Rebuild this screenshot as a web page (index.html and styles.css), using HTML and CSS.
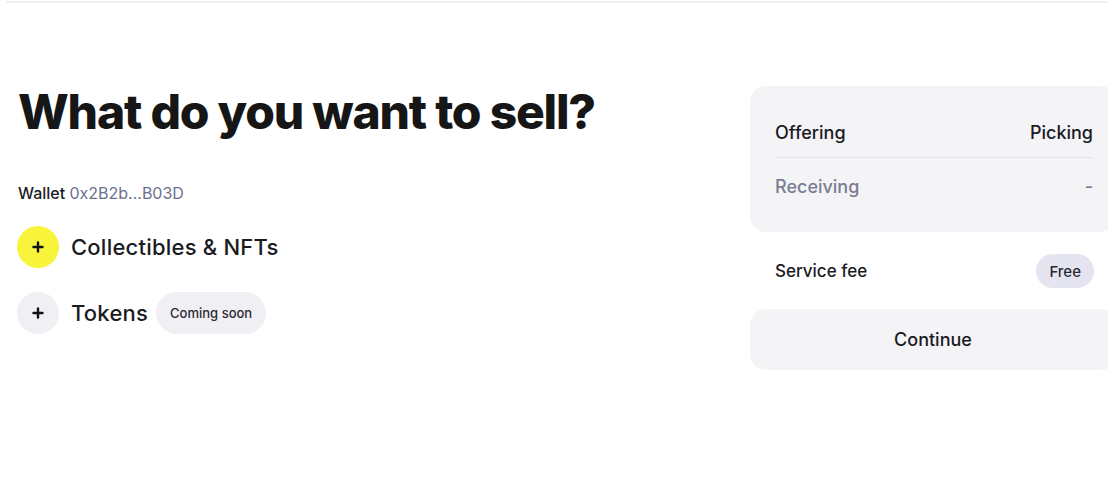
FILE: index.html
```html
<!DOCTYPE html>
<html>
<head>
<meta charset="utf-8">
<link rel="stylesheet" href="styles.css">
</head>
<body>
<div class="topline"></div>
<div class="page">
  <section class="left">
    <h1 class="title">What do you want to sell?</h1>
    <div class="wallet">Wallet <span class="addr">0x2B2b...B03D</span></div>
    <div class="options">
      <div class="option">
        <span class="plus plus-yellow"><svg width="12" height="12" viewBox="0 0 12 12"><path d="M6 1.5v9M1.5 6h9" stroke="#111" stroke-width="2.4" stroke-linecap="round"/></svg></span>
        <span class="opt-label">Collectibles &amp; NFTs</span>
      </div>
      <div class="option">
        <span class="plus plus-gray"><svg width="12" height="12" viewBox="0 0 12 12"><path d="M6 1.5v9M1.5 6h9" stroke="#111" stroke-width="2.4" stroke-linecap="round"/></svg></span>
        <span class="opt-label">Tokens</span>
        <span class="soon">Coming soon</span>
      </div>
    </div>
  </section>
  <aside class="right">
    <div class="card">
      <div class="row row-top"><span>Offering</span><span>Picking</span></div>
      <div class="row row-muted"><span>Receiving</span><span>-</span></div>
    </div>
    <div class="fee"><span>Service fee</span><span class="free">Free</span></div>
    <button class="continue">Continue</button>
  </aside>
</div>
</body>
</html>
```
FILE: styles.css
```css
html, body {
  margin: 0;
  padding: 0;
  background: #fff;
  overflow: hidden;
}
body {
  width: 1108px;
  height: 480px;
  font-family: "Inter", "Lato", sans-serif;
  color: #1b1b1f;
}
.topline {
  height: 2px;
  margin: 1px 0 0 6px;
  background: #f0eff5;
}
.page {
  display: flex;
  padding-top: 83px;
}
.left {
  flex: none;
  width: 732px;
  padding-left: 18px;
}
.title {
  margin: 0;
  font-size: 48px;
  line-height: 52px;
  font-weight: 800;
  letter-spacing: -0.025em;
  color: #161616;
}
.wallet {
  margin-top: 45px;
  font-size: 16px;
  line-height: 20px;
  font-weight: 500;
  color: #1b1b1f;
}
.addr {
  color: #6c7090;
  font-weight: 400;
}
.options {
  margin-top: 23px;
  display: flex;
  flex-direction: column;
  gap: 24px;
}
.option {
  display: flex;
  align-items: center;
  height: 42px;
}
.plus {
  width: 42px;
  height: 42px;
  border-radius: 50%;
  display: flex;
  align-items: center;
  justify-content: center;
  margin-right: 12px;
  margin-left: -1px;
}
.plus-yellow { background: #f8f43c; }
.plus-gray { background: #efeff4; }
.opt-label {
  font-size: 22px;
  font-weight: 500;
  letter-spacing: 0.01em;
  color: #1b1b1f;
}
.soon {
  margin-left: 8px;
  height: 42px;
  padding: 0 14px;
  border-radius: 21px;
  background: #efeff4;
  display: flex;
  align-items: center;
  font-size: 13px;
  font-weight: 500;
  color: #2a2a30;
}
.right {
  width: 366px;
  flex: none;
}
.card {
  background: #f4f4f7;
  border-radius: 16px;
  padding: 24px 23px 18px 25px;
}
.row {
  display: flex;
  justify-content: space-between;
  align-items: center;
  font-size: 18px;
  font-weight: 500;
}
.row-top {
  height: 50px;
  margin-top: -3px;
  border-bottom: 1px solid #e2e4ec;
  color: #1b1b1f;
}
.row-muted {
  height: 56px;
  color: #7a7d92;
}
.fee {
  display: flex;
  justify-content: space-between;
  align-items: center;
  height: 34px;
  margin-top: 22px;
  padding: 0 22px 0 25px;
  font-size: 17px;
  font-weight: 500;
}
.free {
  background: #e4e5f0;
  border-radius: 17px;
  height: 34px;
  padding: 0 13px;
  display: flex;
  align-items: center;
  font-size: 15px;
  color: #2a2a30;
}
.continue {
  display: block;
  margin-top: 21px;
  width: 366px;
  height: 61px;
  border: none;
  border-radius: 16px;
  background: #f4f4f7;
  font-family: inherit;
  font-size: 18px;
  font-weight: 500;
  color: #1b1b1f;
  padding: 0;
}
```
